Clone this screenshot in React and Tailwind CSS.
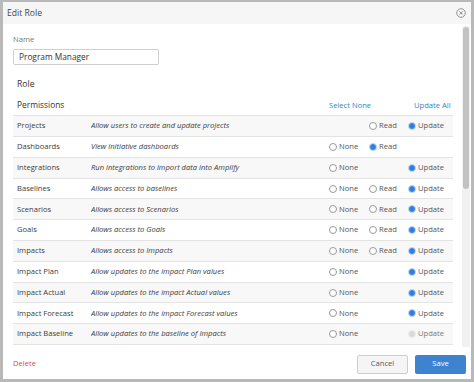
import { useState } from "react";

const ROWS = [
  { name: "Projects", desc: "Allow users to create and update projects", opts: ["Read", "Update"], value: "Update" },
  { name: "Dashboards", desc: "View initiative dashboards", opts: ["None", "Read"], value: "Read" },
  { name: "Integrations", desc: "Run integrations to import data into Amplify", opts: ["None", "Update"], value: "Update" },
  { name: "Baselines", desc: "Allows access to baselines", opts: ["None", "Read", "Update"], value: "Update" },
  { name: "Scenarios", desc: "Allows access to Scenarios", opts: ["None", "Read", "Update"], value: "Update" },
  { name: "Goals", desc: "Allows access to Goals", opts: ["None", "Read", "Update"], value: "Update" },
  { name: "Impacts", desc: "Allows access to Impacts", opts: ["None", "Read", "Update"], value: "Update" },
  { name: "Impact Plan", desc: "Allow updates to the impact Plan values", opts: ["None", "Update"], value: "Update" },
  { name: "Impact Actual", desc: "Allow updates to the impact Actual values", opts: ["None", "Update"], value: "Update" },
  { name: "Impact Forecast", desc: "Allow updates to the impact Forecast values", opts: ["None", "Update"], value: "Update" },
  { name: "Impact Baseline", desc: "Allow updates to the baseline of Impacts", opts: ["None", "Update"], value: "Update", disabled: true },
];

const COLS = [
  { key: "None", w: "w-[40px]" },
  { key: "Read", w: "w-[39px]" },
  { key: "Update", w: "w-[45px]" },
];

function Radio({ checked, disabled, label, onClick }) {
  let dot = "border border-[#9a9a9a] bg-white";
  if (checked && !disabled) dot = "border-[1.5px] border-[#c3dbf7] bg-[#2f7fe0]";
  if (checked && disabled) dot = "border-[1.5px] border-[#eeeeee] bg-[#d8d8d8]";
  return (
    <button type="button" onClick={onClick} className="flex items-center gap-[2px] text-[#555]">
      <span className={`block h-[8px] w-[8px] rounded-full ${dot}`} />
      <span className={disabled ? "text-[#777]" : ""}>{label}</span>
    </button>
  );
}

export default function App() {
  const [values, setValues] = useState(ROWS.map((r) => r.value));

  const pick = (i, v) => {
    if (ROWS[i].disabled) return;
    setValues((prev) => prev.map((x, j) => (j === i ? v : x)));
  };

  return (
    <div
      className="h-[382px] w-[474px] overflow-hidden bg-[#b9b9b9] pb-[3px] pl-[3px] pr-[3px] pt-[2px] text-[7.6px] text-[#333]"
      style={{ fontFamily: '"Open Sans", "Noto Sans", sans-serif' }}
    >
      <div className="flex h-full flex-col bg-white">
        {/* header */}
        <div className="flex h-[22px] shrink-0 items-center justify-between bg-[#f6f6f6] pl-[4px] pr-[5px]">
          <span className="text-[8.6px] text-[#444]">Edit Role</span>
          <svg width="10" height="10" viewBox="0 0 10 10" className="text-[#8a8a8a]">
            <circle cx="5" cy="5" r="4.3" fill="none" stroke="currentColor" strokeWidth="0.9" />
            <path d="M3.3 3.3 6.7 6.7M6.7 3.3 3.3 6.7" stroke="currentColor" strokeWidth="0.9" />
          </svg>
        </div>

        {/* body */}
        <div className="flex min-h-0 flex-1">
          <div className="min-w-0 flex-1 overflow-hidden pl-[10px] pr-[9px] pt-[10px]">
            <div className="text-[#777]">Name</div>
            <div className="mt-[4px] flex h-[16px] w-[146px] items-center rounded-[2px] border border-[#cfcfcf] px-[5px] text-[8.3px] text-[#333]">
              Program Manager
            </div>

            <div className="mt-[13px] pl-[4px] text-[8.6px] text-[#333]">Role</div>

            <div className="mt-[4px] flex h-[20px] items-center">
              <span className="flex-1 pl-[4px] text-[8.4px]">Permissions</span>
              <span className="w-[85px] whitespace-nowrap text-[#2a86c6]">Select None</span>
              <span className="w-[39px] whitespace-nowrap text-[#2a86c6]">Update All</span>
            </div>

            <div className="border-b border-[#e4e4e4]">
              {ROWS.map((row, i) => (
                <div
                  key={row.name}
                  className={`flex h-[20.8px] items-center border-t border-[#e4e4e4] pl-[4px] ${i % 2 === 0 ? "bg-[#f8f8f8]" : "bg-white"}`}
                >
                  <span className="w-[74px] shrink-0 text-[#3c3c3c]">{row.name}</span>
                  <span className="min-w-0 flex-1 truncate italic text-[#3c3c3c]">{row.desc}</span>
                  {COLS.map((c) => (
                    <div key={c.key} className={`${c.w} shrink-0`}>
                      {row.opts.includes(c.key) && (
                        <Radio
                          label={c.key}
                          checked={values[i] === c.key}
                          disabled={row.disabled && values[i] === c.key}
                          onClick={() => pick(i, c.key)}
                        />
                      )}
                    </div>
                  ))}
                </div>
              ))}
            </div>
          </div>

          {/* scrollbar */}
          <div className="mr-[1px] mt-[2px] w-[8px] shrink-0 bg-[#f1f1f1] pb-[2px]">
            <div className="mx-auto mt-[1px] h-[162px] w-[6px] rounded-[3px] bg-[#c2c2c2]" />
          </div>
        </div>

        {/* footer */}
        <div className="flex h-[32px] shrink-0 items-center justify-between pl-[10px] pr-[5px] pt-[2px]">
          <button type="button" className="text-[#e24a44]">Delete</button>
          <div className="flex gap-[7px]">
            <button type="button" className="h-[19px] w-[51px] rounded-[2px] border border-[#cdcdcd] bg-[#f5f5f5] text-[#555]">
              Cancel
            </button>
            <button type="button" className="h-[19px] w-[51px] rounded-[2px] bg-[#3d83d0] text-white">
              Save
            </button>
          </div>
        </div>
      </div>
    </div>
  );
}
